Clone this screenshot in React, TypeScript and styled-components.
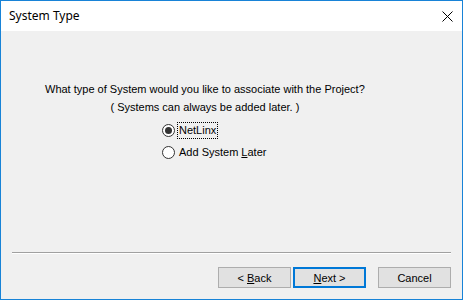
import React from "react";
import styled, { createGlobalStyle } from "styled-components";

const Global = createGlobalStyle`
  html, body { margin: 0; padding: 0; background: #f0f0f0; }
  * { box-sizing: border-box; }
`;

const Window = styled.div`
  width: 463px;
  height: 300px;
  border: 1px solid #1883d7;
  display: flex;
  flex-direction: column;
  background: #f0f0f0;
  font-family: "Liberation Sans", Arial, sans-serif;
  font-size: 11px;
  color: #000;
`;

const TitleBar = styled.div`
  height: 30px;
  flex: none;
  background: #fff;
  display: flex;
  align-items: center;
  justify-content: space-between;
  padding: 0 9px 0 8px;
`;

const Title = styled.span`
  font-family: "Noto Sans", "Segoe UI", sans-serif;
  font-size: 12px;
  color: #000;
  padding-bottom: 1px;
`;

const CloseBox = styled.div`
  width: 12px;
  height: 12px;
  display: flex;
  align-items: center;
  justify-content: center;
`;

const Body = styled.div`
  height: 221px;
  flex: none;
  padding: 49px 0 0 44px;
  display: flex;
  flex-direction: column;
`;

const Question = styled.div`
  align-self: flex-start;
  text-align: center;
  line-height: 18px;
`;

const RadioGroup = styled.div`
  margin: 3px 0 0 117px;
  display: flex;
  flex-direction: column;
`;

const RadioRow = styled.label`
  height: 22px;
  display: flex;
  align-items: center;
  gap: 2px;
`;

const Circle = styled.span<{ $checked?: boolean }>`
  width: 13px;
  height: 13px;
  border-radius: 50%;
  border: 1px solid #333;
  background: #fff;
  display: flex;
  align-items: center;
  justify-content: center;
  &::after {
    content: "";
    display: ${(p) => (p.$checked ? "block" : "none")};
    width: 7px;
    height: 7px;
    border-radius: 50%;
    background: #333;
  }
`;

const RadioLabel = styled.span<{ $focused?: boolean }>`
  line-height: 13px;
  padding: 1px 1px 1px 1px;
  border: 1px ${(p) => (p.$focused ? "dotted #000" : "solid transparent")};
`;

const Key = styled.span`
  text-decoration: underline;
  text-underline-offset: 1px;
`;

const Separator = styled.div`
  margin: 0 11px;
  height: 2px;
  flex: none;
  border-top: 1px solid #a0a0a0;
  border-bottom: 1px solid #fff;
`;

const Footer = styled.div`
  padding: 13px 11px 0 0;
  display: flex;
  justify-content: flex-end;
`;

const Button = styled.button<{ $default?: boolean; $gap?: number }>`
  width: 73px;
  height: 21px;
  margin-left: ${(p) => p.$gap ?? 0}px;
  background: #e1e1e1;
  border: ${(p) => (p.$default ? "2px solid #0078d7" : "1px solid #adadad")};
  font-family: "Liberation Sans", Arial, sans-serif;
  font-size: 11px;
  color: #000;
  padding: 0;
  display: flex;
  align-items: center;
  justify-content: center;
`;

export default function App() {
  return (
    <>
      <Global />
      <Window>
        <TitleBar>
          <Title>System Type</Title>
          <CloseBox>
            <svg width="11" height="11" viewBox="0 0 11 11">
              <path d="M0.5 0.5 L10.5 10.5 M10.5 0.5 L0.5 10.5" stroke="#000" strokeWidth="1" />
            </svg>
          </CloseBox>
        </TitleBar>
        <Body>
          <Question>
            What type of System would you like to associate with the Project?
            <br />( Systems can always be added later. )
          </Question>
          <RadioGroup>
            <RadioRow>
              <Circle $checked />
              <RadioLabel $focused>NetLinx</RadioLabel>
            </RadioRow>
            <RadioRow>
              <Circle />
              <RadioLabel>
                Add System <Key>L</Key>ater
              </RadioLabel>
            </RadioRow>
          </RadioGroup>
        </Body>
        <Separator />
        <Footer>
          <Button>
            &lt;&nbsp;<Key>B</Key>ack
          </Button>
          <Button $default $gap={2}>
            <Key>N</Key>ext &gt;
          </Button>
          <Button $gap={12}>Cancel</Button>
        </Footer>
      </Window>
    </>
  );
}
